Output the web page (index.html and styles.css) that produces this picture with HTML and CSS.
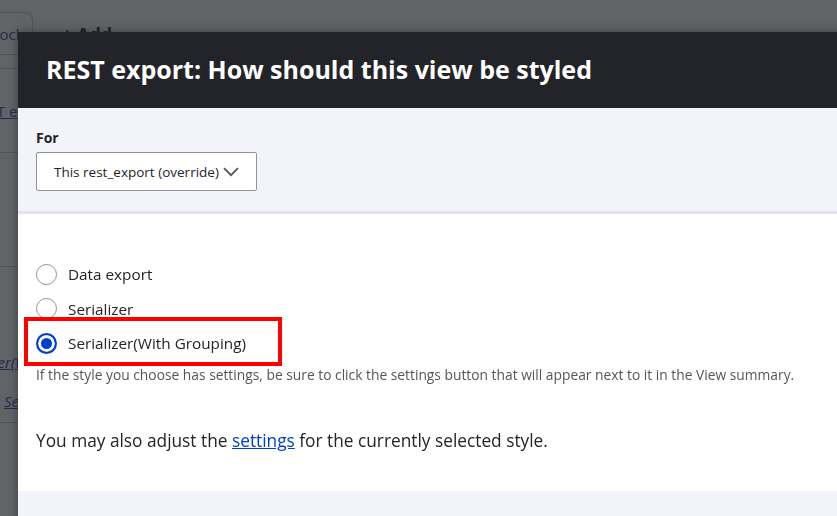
FILE: index.html
```html
<!DOCTYPE html>
<html lang="en">
<head>
<meta charset="utf-8">
<title>REST export: How should this view be styled</title>
<link rel="stylesheet" href="styles.css">
</head>
<body>
<div class="page">
  <div class="page-top">
    <span class="page-btn"><span class="page-btn-text">Block</span></span>
    <span class="page-add">+ Add</span>
  </div>
  <div class="page-rule"></div>
  <div class="page-band"></div>
  <div class="page-rule"></div>
  <div class="page-row r1"><a class="page-link" href="#">REST export</a></div>
  <div class="page-rule"></div>
  <div class="page-spacer s1"></div>
  <div class="page-rule"></div>
  <div class="page-row r2"><a class="page-link em" href="#">Serializer(With Grouping)</a></div>
  <div class="page-row r3"><a class="page-link em" href="#">Settings</a></div>
  <div class="page-rule"></div>
</div>
<div class="overlay"></div>
<div class="dialog" role="dialog">
  <div class="dialog-header">
    <h1 class="dialog-title">REST export: How should this view be styled</h1>
  </div>
  <div class="for-section">
    <label class="for-label">For</label>
    <div class="select">
      <span>This rest_export (override)</span>
      <svg class="chevron" width="16" height="10" viewBox="0 0 16 10"><path d="M1 1.2 L8 8.2 L15 1.2" fill="none" stroke="#55565b" stroke-width="1.8"/></svg>
    </div>
  </div>
  <div class="content">
    <div class="radios">
      <div class="radio-row"><span class="radio"></span><span class="radio-label">Data export</span></div>
      <div class="radio-row"><span class="radio"></span><span class="radio-label">Serializer</span></div>
      <div class="radio-row selected"><span class="radio checked"></span><span class="radio-label">Serializer(With Grouping)</span><span class="highlight"></span></div>
    </div>
    <p class="description">If the style you choose has settings, be sure to click the settings button that will appear next to it in the View summary.</p>
    <p class="note">You may also adjust the <a href="#">settings</a> for the currently selected style.</p>
  </div>
  <div class="dialog-footer"></div>
</div>
</body>
</html>
```
FILE: styles.css
```css
html, body {
  margin: 0;
  padding: 0;
  width: 837px;
  height: 516px;
  overflow: hidden;
  background: #ffffff;
  font-family: "Open Sans", "Noto Sans", sans-serif;
  color: #232429;
}

.page {
  width: 837px;
  height: 516px;
}
.page-top {
  display: flex;
  align-items: flex-start;
  height: 54px;
}
.page-btn {
  margin-top: 12px;
  height: 42px;
  width: 33px;
  box-sizing: border-box;
  border: 1px solid #c5c7cf;
  border-left: none;
  border-bottom: none;
  border-radius: 0 8px 0 0;
  display: flex;
  align-items: center;
  white-space: nowrap;
}
.page-btn-text {
  color: #2b3aa0;
  font-size: 15px;
  margin-left: -14px;
}
.page-add {
  margin-left: 29px;
  margin-top: 22px;
  font-weight: 700;
  font-size: 18px;
}
.page-rule {
  height: 1px;
  background: #c9cad0;
}
.page-band {
  height: 13px;
}
.page-row {
  display: flex;
  align-items: center;
  white-space: nowrap;
}
.page-row.r1 {
  height: 83px;
  margin-left: -29px;
}
.page-link {
  color: #2b3aa0;
  font-size: 15px;
}
.page-link.em {
  font-style: italic;
}
.page-spacer.s1 {
  height: 113px;
}
.page-row.r2 {
  margin-top: 84px;
  height: 22px;
  margin-left: -50px;
}
.page-row.r3 {
  margin-top: 17px;
  height: 22px;
  margin-bottom: 10px;
  margin-left: 4px;
}

.overlay {
  position: fixed;
  inset: 0;
  background: rgba(34, 35, 40, 0.71);
}

.dialog {
  position: fixed;
  left: 18px;
  top: 32px;
  width: 900px;
  background: #ffffff;
  box-shadow: 0 0 10px rgba(0, 0, 0, 0.35);
}

.dialog-header {
  height: 76px;
  background: #232429;
  display: flex;
  align-items: center;
  padding: 0 28px;
}
.dialog-title {
  margin: 0;
  color: #ffffff;
  font-size: 25px;
  font-weight: 700;
  line-height: 32px;
  margin-top: -2px;
}

.for-section {
  background: #f3f4f9;
  padding: 20px 18px 20px 18px;
  border-bottom: 3px solid #e1e2e8;
}
.for-label {
  display: block;
  font-size: 14px;
  font-weight: 700;
  line-height: 20px;
  margin-bottom: 4px;
}
.select {
  width: 221px;
  height: 39px;
  box-sizing: border-box;
  border: 1px solid #8e929c;
  border-radius: 2px;
  background: #ffffff;
  display: flex;
  align-items: center;
  padding-left: 17px;
  font-size: 13.5px;
  color: #232429;
  gap: 4px;
}

.content {
  padding: 43px 18px 37px 18px;
}
.radios {
  display: flex;
  flex-direction: column;
}
.radio-row {
  position: relative;
  display: flex;
  align-items: center;
  height: 34.5px;
  gap: 11px;
}
.radio {
  width: 21px;
  height: 21px;
  box-sizing: border-box;
  border: 1px solid #8e929c;
  border-radius: 50%;
  background: #ffffff;
}
.radio.checked {
  border: 2px solid #003ecc;
  background: #003ecc;
  box-shadow: inset 0 0 0 3px #ffffff;
}
.radio-label {
  font-size: 15.3px;
}
.highlight {
  position: absolute;
  left: -12px;
  top: -9px;
  width: 258px;
  height: 49px;
  box-sizing: border-box;
  border: 4px solid #ff0000;
}
.description {
  margin: 5px 0 0 0;
  font-size: 13.8px;
  line-height: 18px;
  color: #55565b;
  white-space: nowrap;
}
.note {
  margin: 43px 0 0 0;
  font-size: 17.3px;
  line-height: 27px;
}
.note a {
  color: #003ecc;
}

.dialog-footer {
  height: 40px;
  background: #f3f4f9;
}
```
